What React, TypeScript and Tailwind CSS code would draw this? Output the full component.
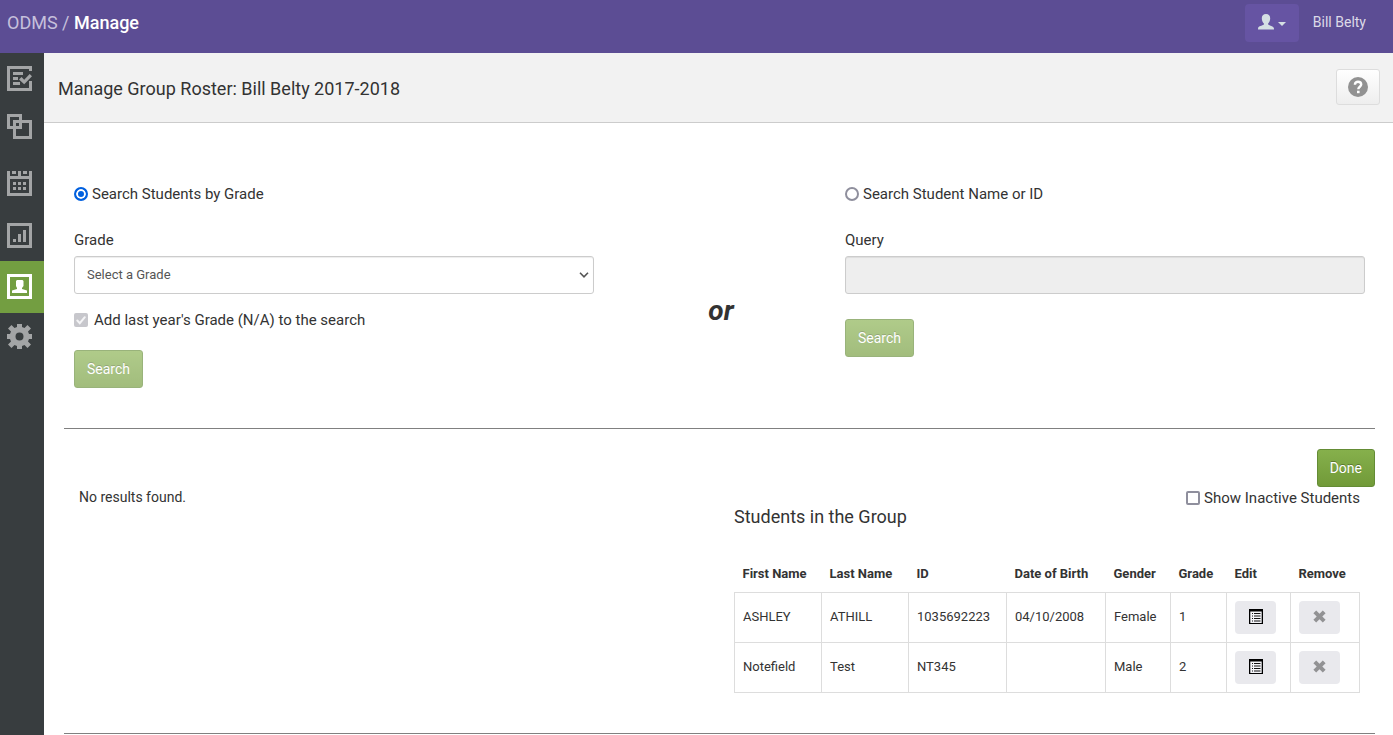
import type { ReactNode } from "react";

type Student = {
  first: string;
  last: string;
  id: string;
  dob: string;
  gender: string;
  grade: string;
};

const students: Student[] = [
  { first: "ASHLEY", last: "ATHILL", id: "1035692223", dob: "04/10/2008", gender: "Female", grade: "1" },
  { first: "Notefield", last: "Test", id: "NT345", dob: "", gender: "Male", grade: "2" },
];

const columns = [
  { label: "First Name", width: "w-[87px]" },
  { label: "Last Name", width: "w-[87px]" },
  { label: "ID", width: "w-[98px]" },
  { label: "Date of Birth", width: "w-[99px]" },
  { label: "Gender", width: "w-[65px]" },
  { label: "Grade", width: "w-[56px]" },
  { label: "Edit", width: "w-[64px]" },
  { label: "Remove", width: "w-[69px]" },
];

const glyphs: Record<string, ReactNode> = {
  tasks: (
    <>
      <path d="M0 0h25v5h-3V3H3v19h19v-7h3v10H0z" />
      <path d="M6 6h10v3H6zM6 11h5v3H6zM6 16h7v3H6z" />
      <path d="M12 13.500l2.500-2.500 2.700 2.700L22.700 8 25 10.300 17.200 18.300z" />
    </>
  ),
  groups: <path fillRule="evenodd" d="M0 0h15v6h10v19H6V15H0zM3 3v9h3V6h6V3zM9 9v3h3V9zM15 9v6H9v7h13V9z" />,
  calendar: (
    <>
      <path d="M0 0h3v5h8V0h3v5h8V0h3v25H0zM3 8v14h19V8z" fillRule="evenodd" />
      <path d="M5 0h4v3H5zM16 0h4v3h-4z" />
      <path d="M6 11h3v3H6zM11 11h3v3h-3zM16 11h3v3h-3zM6 16h3v3H6zM11 16h3v3h-3zM16 16h3v3h-3z" />
    </>
  ),
  reports: (
    <>
      <path fillRule="evenodd" d="M0 0h25v25H0zM3 3v19h19V3z" />
      <path d="M6 16h3v3H6zM11 11h3v8h-3zM16 7h3v12h-3z" />
    </>
  ),
  people: (
    <>
      <path fillRule="evenodd" d="M0 0h25v25H0zM3 3v19h19V3z" />
      <path d="M10 6h5.500l1 1v5l-1.500 2v1l5 1.500V19H5v-2.500l5-1.500v-1l-1-2V7z" />
    </>
  ),
  settings: (
    <path
      fillRule="evenodd"
      d="M10 0h5v3l2.500 1 3-3L24 4.500l-3 3L22 10h3v5h-3l-1 2.500 3 3-3.500 3.500-3-3L15 22v3h-5v-3l-2.500-1-3 3L1 20.500l3-3L3 15H0v-5h3l1-2.500-3-3L4.500 1l3 3L10 3zM12.500 8.500a4 4 0 1 0 0 8 4 4 0 0 0 0-8z"
    />
  ),
};

const navItems = [
  { name: "tasks", label: "Assessments", box: "h-[50px] text-[#a3a5a6]" },
  { name: "groups", label: "Groups", box: "h-[46px] text-[#a3a5a6]" },
  { name: "calendar", label: "Calendar", box: "mt-2 h-[52px] text-[#a3a5a6]" },
  { name: "reports", label: "Reports", box: "h-[52px] text-[#a3a5a6]" },
  { name: "people", label: "Manage", box: "h-[52px] bg-[#739e41] pb-[2px] text-white" },
  { name: "settings", label: "Settings", box: "h-[46px] text-[#a3a5a6]" },
];

const greenButton =
  "h-[38px] rounded-[3px] border border-[#648c35] bg-linear-to-b from-[#86b04c] to-[#719a38] px-3 text-sm text-white [text-shadow:0_-1px_0_rgba(0,0,0,0.3)]";
const radioStyle =
  "size-3.5 shrink-0 appearance-none rounded-full border-2 border-[#8f8f9d] bg-white checked:border-[#0060df] checked:bg-[#0060df] checked:shadow-[inset_0_0_0_2px_#fff]";

function PersonIcon() {
  return (
    <svg viewBox="0 0 16 16" className="size-4" fill="currentColor" aria-hidden="true">
      <path d="M8 0c2.800 0 4.200 1.800 4.200 4.300 0 2.100-.8 4.200-2.100 5.200v1c1.900 1.300 5.200 1.500 5.800 3.500l.1 1.500H0l.1-1.500c.6-2 3.900-2.200 5.800-3.500v-1C4.600 8.500 3.800 6.400 3.800 4.300 3.800 1.800 5.200 0 8 0z" />
    </svg>
  );
}

function ListIcon() {
  return (
    <svg viewBox="0 0 14 15" className="h-[15px] w-3.5" aria-hidden="true">
      <path fill="#f4f4f8" d="M0 0h14v15H0z" />
      <path fill="#000" fillRule="evenodd" d="M0 0h14v15H0zM1.300 2.500V14h11.400V2.500z" />
      <path fill="#111" d="M3 4h1v1H3zM5 4h6.500v1H5zM3 6.500h1v1H3zM5 6.500h6.500v1H5zM3 9h1v1H3zM5 9h6.500v1H5zM3 11.500h1v1H3zM5 11.500h6.500v1H5z" />
    </svg>
  );
}

function RemoveIcon() {
  return (
    <svg viewBox="0 0 13 13" className="size-[13px]" fill="#929294" aria-hidden="true">
      <path d="M3.200.4l3.300 3.300L9.800.4l2.800 2.800-3.300 3.300 3.300 3.300-2.800 2.800-3.300-3.300-3.300 3.300L.4 9.800l3.300-3.300L.4 3.200z" />
    </svg>
  );
}

export default function App() {
  return (
    <div className="flex min-h-screen flex-col bg-white font-[Roboto,sans-serif] text-[15px] leading-5 text-[#333]">
      <header className="flex h-[53px] items-center justify-between bg-[#5c4d94] pr-[27px] pb-2 pl-[7px]">
        <nav aria-label="Breadcrumb" className="text-lg text-[#c6c0dc]">
          <a href="#odms">ODMS</a> / <span className="font-medium text-white">Manage</span>
        </nav>
        <div className="flex items-center gap-3.5 text-sm text-[#dcdae8]">
          <button
            type="button"
            aria-label="Account menu"
            className="flex h-[38px] w-[54px] items-center justify-center gap-1 rounded bg-[#6654a3] pb-[2px] text-[#d5dfe3]"
          >
            <PersonIcon />
            <svg viewBox="0 0 8 4" className="mt-1 h-1 w-2" fill="currentColor" aria-hidden="true">
              <path d="M0 0h8L4 4z" />
            </svg>
          </button>
          <a href="#profile" className="pb-[2px]">
            Bill Belty
          </a>
        </div>
      </header>

      <div className="flex flex-1">
        <nav aria-label="Main" className="w-11 shrink-0 bg-[#383d3f]">
          {navItems.map((item) => (
            <a
              key={item.name}
              href={"#" + item.name}
              aria-label={item.label}
              className={"flex items-center pl-[7px] " + item.box}
            >
              <svg viewBox="0 0 25 25" className="size-[25px]" fill="currentColor" aria-hidden="true">
                {glyphs[item.name]}
              </svg>
            </a>
          ))}
        </nav>

        <main className="min-w-0 flex-1">
          <div className="flex h-[70px] items-start justify-between border-b border-[#ccc] bg-[#f2f2f2] pt-4 pr-[13px] pl-3.5">
            <h1 className="text-lg leading-10">Manage Group Roster: Bill Belty 2017-2018</h1>
            <button
              type="button"
              aria-label="Help"
              className="flex h-9 w-11 items-center justify-center rounded-[3px] border border-[#ddd] bg-linear-to-b from-white to-[#eee]"
            >
              <svg viewBox="0 0 20 20" className="size-5" aria-hidden="true">
                <circle cx="10" cy="10" r="10" fill="#929292" />
                <path
                  d="M6.900 7.700C6.900 5.600 8.300 4.800 10 4.800s3.200.9 3.200 2.700c0 2.200-2.900 2.300-2.900 4.700"
                  fill="none"
                  stroke="#fff"
                  strokeWidth="2.400"
                />
                <path d="M9 13.700h2.600v2.500H9z" fill="#fff" />
              </svg>
            </button>
          </div>

          <div className="pr-[18px] pl-5">
            <form className="grid grid-cols-[520fr_251fr_520fr] border-b border-[#808080] px-2.5 pt-[61px] pb-10">
              <section>
                <label className="flex items-center gap-1">
                  <input type="radio" name="mode" defaultChecked className={radioStyle} />
                  Search Students by Grade
                </label>
                <label htmlFor="grade" className="mt-[26px] block">
                  Grade
                </label>
                <div className="mt-1.5 grid items-center">
                  <select
                    id="grade"
                    className="col-start-1 row-start-1 h-[38px] w-full appearance-none rounded-[3px] border border-[#ccc] bg-white px-3 text-[13px] text-[#555] shadow-[inset_0_1px_1px_rgba(0,0,0,0.075)]"
                  >
                    <option>Select a Grade</option>
                  </select>
                  <svg
                    viewBox="0 0 10 6"
                    className="pointer-events-none col-start-1 row-start-1 mr-[5px] h-1.5 w-2.5 justify-self-end"
                    fill="none"
                    stroke="#555"
                    strokeWidth="1.600"
                    aria-hidden="true"
                  >
                    <path d="M1 .8l4 4 4-4" />
                  </svg>
                </div>
                <label className="mt-4 flex items-center gap-1.5">
                  <span className="grid shrink-0">
                    <input
                      type="checkbox"
                      defaultChecked
                      disabled
                      className="col-start-1 row-start-1 size-3.5 appearance-none rounded-[2px] bg-[#c7c7cc]"
                    />
                    <svg
                      viewBox="0 0 14 14"
                      className="col-start-1 row-start-1 size-3.5"
                      fill="none"
                      stroke="#f4f4f6"
                      strokeWidth="2"
                      strokeLinecap="round"
                      aria-hidden="true"
                    >
                      <path d="M3.300 7.500l2.500 2.700 5-6" />
                    </svg>
                  </span>
                  Add last year's Grade (N/A) to the search
                </label>
                <button type="button" disabled className={"mt-5 opacity-65 " + greenButton}>
                  Search
                </button>
              </section>

              <p className="pt-[109px] pl-[3px] text-center text-[28px] leading-9 font-bold italic">or</p>

              <section>
                <label className="flex items-center gap-1">
                  <input type="radio" name="mode" className={radioStyle} />
                  Search Student Name or ID
                </label>
                <label htmlFor="query" className="mt-[26px] block">
                  Query
                </label>
                <input
                  id="query"
                  type="text"
                  disabled
                  className="mt-1.5 block h-[38px] w-full rounded-[3px] border border-[#ccc] bg-[#eee] px-3 text-[13px] shadow-[inset_0_1px_1px_rgba(0,0,0,0.075)]"
                />
                <button type="button" disabled className={"mt-[25px] opacity-65 " + greenButton}>
                  Search
                </button>
              </section>
            </form>

            <section className="border-b border-[#808080] pt-5 pb-10">
              <div className="flex justify-end">
                <button type="button" className={greenButton}>
                  Done
                </button>
              </div>
              <div className="grid grid-cols-[670fr_641fr]">
                <p className="pl-[15px] text-sm">No results found.</p>
                <div className="pr-[15px]">
                  <label className="flex items-center justify-end gap-1 leading-[22px]">
                    <input
                      type="checkbox"
                      className="size-3.5 appearance-none rounded-[2px] border-2 border-[#8f8f9d] bg-white"
                    />
                    Show Inactive Students
                  </label>
                  <h2 className="text-lg leading-4">Students in the Group</h2>
                  <table className="mt-8 w-full table-fixed border-collapse text-[13px]">
                    <thead>
                      <tr className="h-[35px]">
                        {columns.map((column) => (
                          <th key={column.label} scope="col" className={"px-2 text-left font-bold " + column.width}>
                            {column.label}
                          </th>
                        ))}
                      </tr>
                    </thead>
                    <tbody>
                      {students.map((student) => (
                        <tr key={student.id} className="h-[50px] [&>td]:border [&>td]:border-[#ddd] [&>td]:px-2">
                          <td>{student.first}</td>
                          <td>{student.last}</td>
                          <td>{student.id}</td>
                          <td>{student.dob}</td>
                          <td>{student.gender}</td>
                          <td>{student.grade}</td>
                          <td>
                            <button
                              type="button"
                              aria-label={"Edit " + student.first}
                              className="flex h-[33px] w-[41px] items-center justify-center rounded bg-[#e9e9ed] pb-[2px]"
                            >
                              <ListIcon />
                            </button>
                          </td>
                          <td>
                            <button
                              type="button"
                              aria-label={"Remove " + student.first}
                              className="flex h-[33px] w-[41px] items-center justify-center rounded bg-[#e9e9ed] pb-[2px]"
                            >
                              <RemoveIcon />
                            </button>
                          </td>
                        </tr>
                      ))}
                    </tbody>
                  </table>
                </div>
              </div>
            </section>
          </div>
        </main>
      </div>
    </div>
  );
}
